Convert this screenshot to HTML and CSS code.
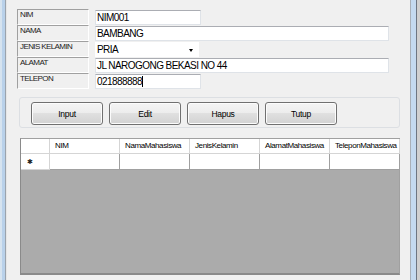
FILE: index.html
```html
<!DOCTYPE html>
<html lang="en">
<head>
    <meta charset="UTF-8">
    <title>Data Mahasiswa</title>
    <link rel="stylesheet" href="styles.css">
</head>
<body>
    <div class="window">
        <div class="frame-left"></div>
        <div class="client">
            <div class="form">
                <div class="form-row">
                    <span class="label">NIM</span>
                    <span class="field short">NIM001</span>
                </div>
                <div class="form-row">
                    <span class="label">NAMA</span>
                    <span class="field wide">BAMBANG</span>
                </div>
                <div class="form-row">
                    <span class="label">JENIS KELAMIN</span>
                    <span class="field combo">PRIA<span class="arrow"></span></span>
                </div>
                <div class="form-row">
                    <span class="label">ALAMAT</span>
                    <span class="field wide">JL NAROGONG BEKASI NO 44</span>
                </div>
                <div class="form-row">
                    <span class="label">TELEPON</span>
                    <span class="field short">021888888<span class="caret"></span></span>
                </div>
            </div>

            <div class="button-panel">
                <button class="btn">Input</button>
                <button class="btn">Edit</button>
                <button class="btn">Hapus</button>
                <button class="btn">Tutup</button>
            </div>

            <div class="grid">
                <div class="grid-head">
                    <span class="corner"></span>
                    <span class="col">NIM</span>
                    <span class="col">NamaMahasiswa</span>
                    <span class="col">JenisKelamin</span>
                    <span class="col">AlamatMahasiswa</span>
                    <span class="col">TeleponMahasiswa</span>
                </div>
                <div class="grid-row">
                    <span class="row-head">&#10033;</span>
                    <span class="cell"></span>
                    <span class="cell"></span>
                    <span class="cell"></span>
                    <span class="cell"></span>
                    <span class="cell"></span>
                </div>
            </div>
        </div>
        <div class="frame-right"></div>
    </div>
</body>
</html>
```

FILE: styles.css
```css
body {
    margin: 0;
    font-family: "Liberation Sans", Arial, sans-serif;
    background: #f0f0f0;
}
.window {
    display: flex;
    width: 420px;
    height: 280px;
    overflow: hidden;
}
.frame-left {
    width: 7px;
    background: linear-gradient(to right, #d6e3ef 0, #d6e3ef 2px, #b9d1ea 2px, #b9d1ea 5px, #9aa3ad 5px, #9aa3ad 6px, #e6e6e6 6px);
}
.frame-right {
    width: 10px;
    background: linear-gradient(to right, #a9b0b8 0, #a9b0b8 1px, #c4daf0 1px, #c4daf0 6px, #6d7682 6px, #6d7682 7px, #d0d0d0 7px);
}
.client {
    flex: 1;
    background: #f0f0f0;
}
.form {
    padding: 9px 0 0 10px;
}
.form-row {
    display: flex;
    height: 16px;
}
.label {
    box-sizing: border-box;
    width: 72px;
    height: 16px;
    border: 1px solid;
    border-color: #a0a0a0 #ffffff #ffffff #a0a0a0;
    padding-left: 2px;
    font-size: 8px;
    line-height: 10px;
    letter-spacing: -0.6px;
    color: #222;
}
.field {
    position: relative;
    box-sizing: border-box;
    height: 15px;
    margin: 1px 0 0 6px;
    padding-left: 1px;
    background: #fff;
    border: 1px solid #dfe3e8;
    border-top-color: #abadb3;
    font-size: 10px;
    line-height: 13px;
    letter-spacing: -0.55px;
    color: #000;
}
.short {
    width: 106px;
}
.wide {
    width: 294px;
}
.combo {
    width: 104px;
    border-color: #fff;
}
.arrow {
    position: absolute;
    right: 5px;
    top: 6px;
    border-left: 2.5px solid transparent;
    border-right: 2.5px solid transparent;
    border-top: 3px solid #000;
}
.caret {
    display: inline-block;
    width: 1px;
    height: 11px;
    background: #000;
    vertical-align: -2px;
}
.button-panel {
    box-sizing: border-box;
    display: flex;
    gap: 6px;
    width: 381px;
    height: 31px;
    margin: 8px 0 0 12px;
    padding: 4px 0 0 11px;
    border: 1px solid #dcdfe3;
    border-radius: 3px;
}
.btn {
    box-sizing: border-box;
    width: 72px;
    height: 23px;
    padding: 0;
    border: 1px solid #707070;
    border-radius: 3px;
    background: linear-gradient(to bottom, #f4f4f4 0, #ececec 50%, #e0e0e0 50%, #d2d2d2 100%);
    box-shadow: inset 0 0 0 1px #fcfcfc;
    font-family: "Liberation Sans", Arial, sans-serif;
    font-size: 8.5px;
    letter-spacing: -0.3px;
    color: #000;
}
.grid {
    box-sizing: border-box;
    width: 380px;
    height: 137px;
    margin: 10px 0 0 13px;
    background: #ababab;
    border: 1px solid #a0a0a0;
    border-left-color: #8a8a8a;
    border-bottom: 2px solid #8a8a8a;
}
.grid-head,
.grid-row {
    display: grid;
    grid-template-columns: 29px repeat(5, 70px);
    height: 15px;
}
.grid-head span {
    box-sizing: border-box;
    background: #fff;
    border-right: 1px solid #d5d5d5;
    border-bottom: 1px solid #d5d5d5;
    padding-left: 5px;
    font-size: 8px;
    line-height: 14px;
    letter-spacing: -0.4px;
    white-space: nowrap;
    overflow: hidden;
    color: #000;
}
.grid-row span {
    box-sizing: border-box;
    background: #fff;
    border-right: 1px solid #a0a0a0;
    border-bottom: 1px solid #a0a0a0;
}
.grid-row .row-head {
    border-right-color: #d5d5d5;
    border-bottom-color: #d5d5d5;
    padding-left: 6px;
    font-size: 7px;
    line-height: 15px;
    color: #222;
}
```
